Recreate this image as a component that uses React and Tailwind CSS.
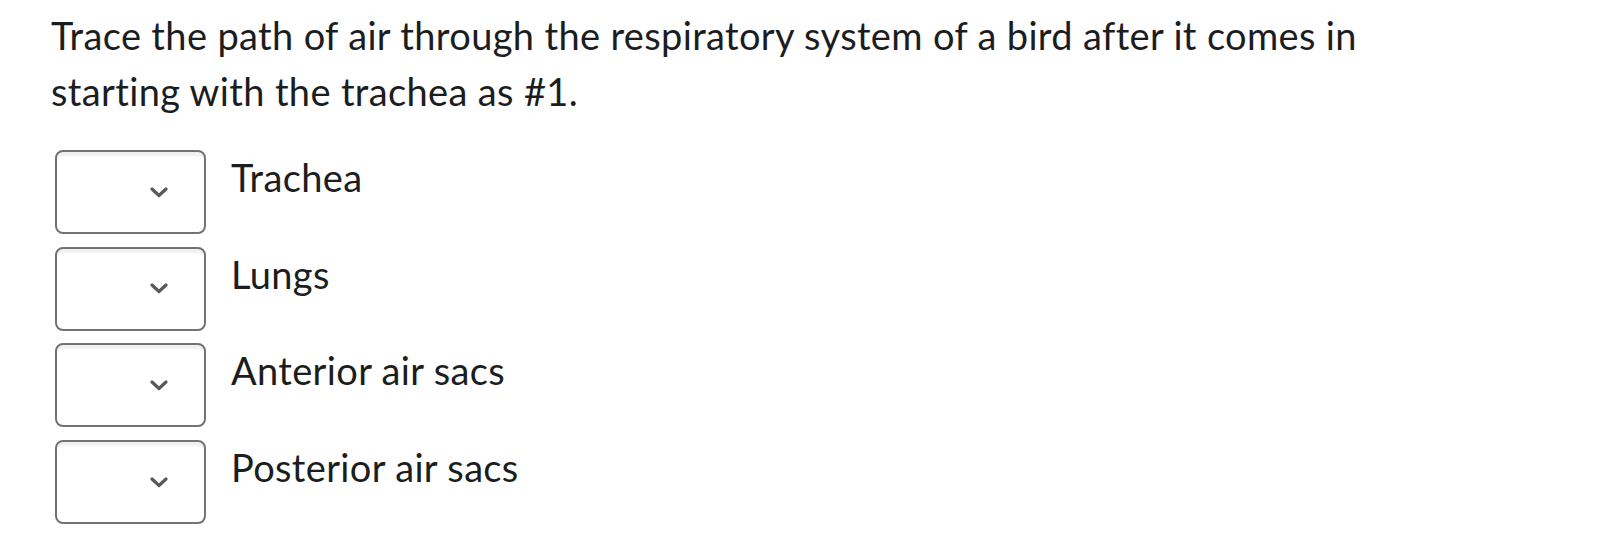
const items = ["Trachea", "Lungs", "Anterior air sacs", "Posterior air sacs"];

function Chevron() {
    return (
        <svg width="18" height="11" viewBox="0 0 18 11" className="shrink-0" aria-hidden="true">
            <polyline
                points="2,2 9,8.5 16,2"
                fill="none"
                stroke="#565a5d"
                strokeWidth="3.2"
                strokeLinecap="round"
                strokeLinejoin="round"
            />
        </svg>
    );
}

function OrderSelect() {
    return (
        <div className="ml-[4px] w-[151px] h-[84px] shrink-0 rounded-[8px] border-2 border-[#717476] bg-white shadow-[inset_0_6px_2px_-2px_rgba(0,0,0,0.06)] flex items-center justify-end pr-[36px]">
            <Chevron />
        </div>
    );
}

export default function App() {
    return (
        <div className="w-full min-h-screen bg-white font-['Lato',sans-serif] text-[#1c1d1e] tracking-[0.35px] pl-[51px] pt-[7px]">
            <p className="text-[38px] leading-[56px] max-w-[1400px]">
                Trace the path of air through the respiratory system of a bird after it comes in
                <br />
                starting with the trachea as #1.
            </p>
            <div className="mt-[31px] flex flex-col gap-[12.7px]">
                {items.map((item) => (
                    <div key={item} className="flex items-start">
                        <OrderSelect />
                        <span className="ml-[25px] -mt-[1px] text-[38px] leading-[56px]">{item}</span>
                    </div>
                ))}
            </div>
        </div>
    );
}
